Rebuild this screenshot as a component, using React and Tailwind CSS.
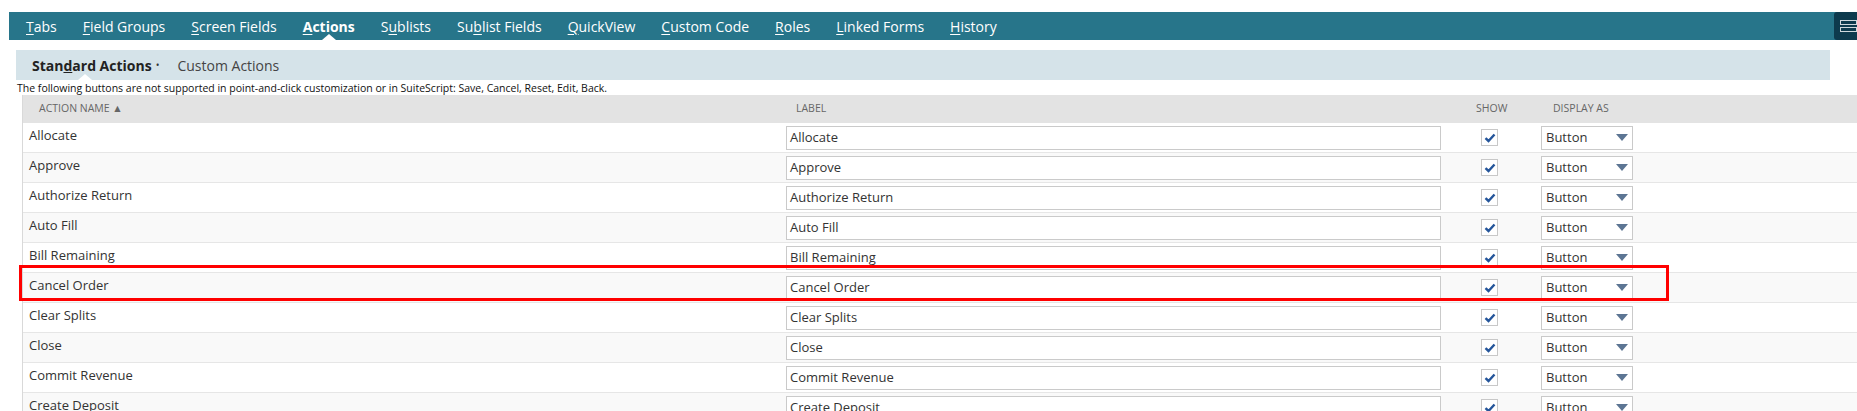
const tabList = [
  { pre: "", u: "T", post: "abs" },
  { pre: "", u: "F", post: "ield Groups" },
  { pre: "", u: "S", post: "creen Fields" },
  { pre: "", u: "A", post: "ctions", active: true },
  { pre: "S", u: "u", post: "blists" },
  { pre: "Su", u: "b", post: "list Fields" },
  { pre: "", u: "Q", post: "uickView" },
  { pre: "", u: "C", post: "ustom Code" },
  { pre: "", u: "R", post: "oles" },
  { pre: "", u: "L", post: "inked Forms" },
  { pre: "", u: "H", post: "istory" },
];
const rows = ["Allocate", "Approve", "Authorize Return", "Auto Fill", "Bill Remaining", "Cancel Order", "Clear Splits", "Close", "Commit Revenue", "Create Deposit"];

function Check() {
  return (
    <div className="w-[17px] h-[17px] border border-[#c8c8c8] bg-white flex items-center justify-center">
      <svg width="12" height="10" viewBox="0 0 12 10"><path d="M1.5 5.2 L4.5 8 L10.5 1.5" stroke="#24559a" strokeWidth="2.4" fill="none" /></svg>
    </div>
  );
}

export default function App() {
  return (
    <div className="w-[1857px] h-[411px] overflow-hidden bg-white pt-[12px] relative" style={{ fontFamily: "'Open Sans', sans-serif" }}>
      <div className="ml-[9px] h-[28px] bg-[#27758a] flex items-center pl-[17px] gap-[26px] text-white text-[14px] relative">
        {tabList.map((t, i) => (
          <div key={i} className={"relative h-full flex items-center " + (t.active ? "font-bold" : "")}>
            <span>{t.pre}<span className="underline underline-offset-2">{t.u}</span>{t.post}</span>
            {t.active && <div className="absolute bottom-0 left-1/2 -translate-x-1/2 w-0 h-0 border-l-[7px] border-r-[7px] border-b-[6px] border-l-transparent border-r-transparent border-b-white" />}
          </div>
        ))}
        <div className="absolute right-0 top-0 w-[23px] h-[28px] bg-[#0d3a4d] rounded-l-[3px] flex flex-col justify-center gap-[2px] pl-[6px]">
          <div className="w-[17px] h-[5px] border border-[#cfd8dc]" />
          <div className="w-[17px] h-[5px] border border-[#cfd8dc]" />
        </div>
      </div>
      <div className="ml-[16px] mt-[10px] mr-[27px] h-[30px] bg-[#d5e3e9] flex items-center pl-[16px] text-[14px] text-[#333]">
        <div className="relative h-full flex items-center">
          <span className="font-bold text-[#222]">Stan<span className="underline">d</span>ard Actions</span>
          <span className="ml-[4px] text-[10px]">•</span>
          <div className="absolute bottom-0 left-[46px] w-0 h-0 border-l-[7px] border-r-[7px] border-b-[6px] border-l-transparent border-r-transparent border-b-white" />
        </div>
        <span className="ml-[18px] text-[#444]">Custom Actions</span>
      </div>
      <div className="ml-[17px] mt-[1px] text-[10.5px] text-[#111] leading-[14px]">The following buttons are not supported in point-and-click customization or in SuiteScript: Save, Cancel, Reset, Edit, Back.</div>
      <div className="ml-[22px] border-l border-[#d9d9d9] text-[13px] text-[#333]">
        <div className="h-[28px] bg-[#e3e3e3] flex items-center text-[10.5px] text-[#666]">
          <div className="w-[763px] pl-[16px]">ACTION NAME ▲</div>
          <div className="w-[690px] pl-[10px]">LABEL</div>
          <div className="w-[77px]">SHOW</div>
          <div>DISPLAY AS</div>
        </div>
        {rows.map((r, i) => (
          <div key={r} className={"h-[30px] flex items-center border-b border-[#e6e6e6] " + (i % 2 ? "bg-[#f9f9f9]" : "bg-white")}>
            <div className="w-[763px] pl-[6px] self-start pt-[3px]">{r}</div>
            <div className="w-[655px] h-[24px] border border-[#cacaca] bg-white flex items-center pl-[3px]">{r}</div>
            <div className="w-[82px] flex justify-center pl-[15px]"><Check /></div>
            <div className="ml-[18px] w-[92px] h-[24px] border border-[#cacaca] bg-white flex items-center justify-between pl-[4px] pr-[4px]">
              <span>Button</span>
              <svg width="12" height="7" viewBox="0 0 12 7"><path d="M0 0 H12 L6 7 Z" fill="#5c7593" /></svg>
            </div>
          </div>
        ))}
      </div>
      <div className="absolute left-[19px] top-[265px] w-[1650px] h-[36px] border-[3px] border-[#ff0000] pointer-events-none" />
    </div>
  );
}
